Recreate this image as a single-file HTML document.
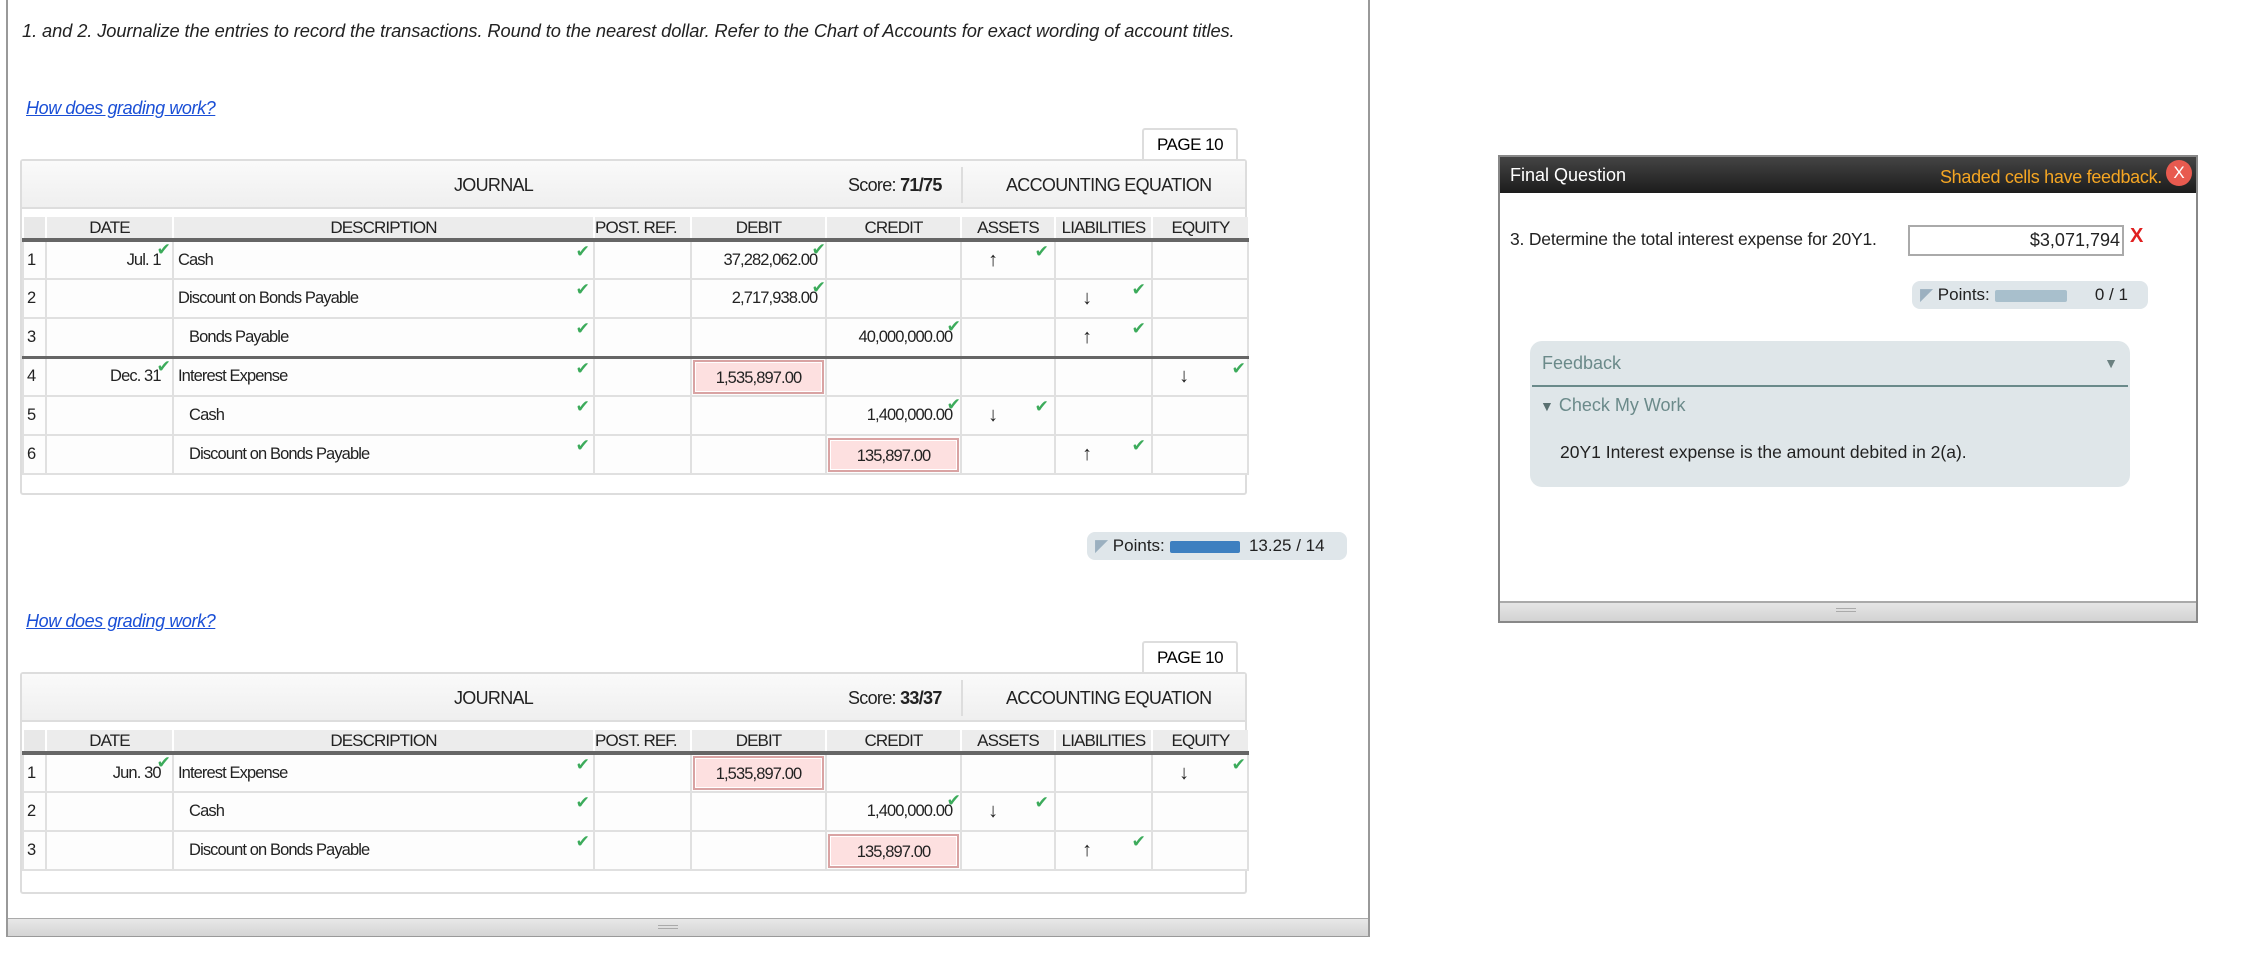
<!DOCTYPE html>
<html><head><meta charset="utf-8"><style>
*{box-sizing:border-box;margin:0;padding:0}
body{width:2248px;height:972px;background:#fff;position:relative;overflow:hidden;font-family:"Liberation Sans",sans-serif}
.abs{position:absolute}
.frame{left:6px;top:-2px;height:939px;border:2px solid #999;border-top:none}
.bbar{left:8px;top:918px;height:18px;background:linear-gradient(#e8e8e8,#d4d4d4);border-top:1px solid #aaa}
.instr{left:22px;top:20px;font-style:italic;font-size:18.3px;color:#222;letter-spacing:-0.1px}
.link{font-style:italic;font-size:18px;color:#1a4fd6;text-decoration:underline;letter-spacing:-0.4px}
.tab{border:2px solid #ddd;border-bottom:none;background:#fff;font-size:17px;letter-spacing:-0.5px;text-align:center;line-height:30px;border-radius:3px 3px 0 0}
.jt{border:2px solid #ddd;border-radius:3px;background:#fff}
.hb{position:absolute;left:0;right:0;top:0;background:linear-gradient(#fafafa,#efefef);border-bottom:2px solid #ddd;font-size:18px;letter-spacing:-0.7px;color:#222}
.hb span{position:absolute}
table{position:absolute;left:0;border-collapse:collapse;font-size:16.5px;letter-spacing:-0.9px;color:#222;table-layout:fixed}
th{font-weight:normal;background:#ececec;height:23px;border-left:2px solid #fff;border-bottom:4px solid #666;font-size:17px;line-height:19px;padding:0;white-space:nowrap;overflow:hidden}
td{border:2px solid #e0e0e0;background:#fdfdfd;position:relative;padding:0 4px;vertical-align:middle;white-space:nowrap}
td.n{padding-left:3px}
.r{text-align:right}
.ck{color:#3cab5b;font-size:17px;position:absolute;top:0px}
.ar{font-size:20px;font-weight:bold}
.pink{background:#fde0e0;border:2px solid #d9a3a3;box-shadow:inset 0 0 0 1px #fff;display:block;height:34px;line-height:32px;text-align:center;margin:0 -3px}
.pts{background:#dfe6ea;border-radius:8px;font-size:17px;color:#222}
.bar{display:inline-block;background:#3d7fc0;height:12px;border-radius:2px;vertical-align:middle}
</style></head><body>
<div class="abs frame" style="width:1364px"></div>
<div class="abs instr">1. and 2. Journalize the entries to record the transactions. Round to the nearest dollar. Refer to the Chart of Accounts for exact wording of account titles.</div>
<div class="abs link" style="left:26px;top:98px">How does grading work?</div>
<div class="abs tab" style="left:1142px;top:128px;width:96px;height:33px">PAGE 10</div>

<div class="abs jt" style="left:20px;top:159px;width:1227px;height:336px">
 <div class="hb" style="height:48px"><span style="left:432px;top:14px">JOURNAL</span><span style="left:826px;top:14px">Score: <b>71/75</b></span><span style="left:939px;top:6px;width:2px;height:36px;background:#ddd"></span><span style="left:984px;top:14px">ACCOUNTING EQUATION</span></div>
 <table style="top:56px;width:1225px">
  <colgroup><col style="width:23px"><col style="width:127px"><col style="width:421px"><col style="width:97px"><col style="width:135px"><col style="width:135px"><col style="width:94px"><col style="width:97px"><col style="width:96px"></colgroup>
  <tr><th style="background:#e8e8e8"></th><th>DATE</th><th>DESCRIPTION</th><th style="text-align:left">POST. REF.</th><th>DEBIT</th><th>CREDIT</th><th>ASSETS</th><th>LIABILITIES</th><th>EQUITY</th></tr>
  <tr style="height:39px"><td class="n">1</td><td class="r">Jul. 1<span class="ck" style="right:2px;top:-2px">✔</span>&nbsp;&nbsp;</td><td>Cash<span class="ck" style="right:4px">✔</span></td><td></td><td class="r">37,282,062.00<span class="ck" style="right:0;top:-2px">✔</span>&nbsp;</td><td></td><td>&nbsp;&nbsp;&nbsp;&nbsp;&nbsp;&nbsp;<span class="ar">↑</span><span class="ck" style="right:6px">✔</span></td><td></td><td></td></tr>
  <tr style="height:39px"><td class="n">2</td><td></td><td>Discount on Bonds Payable<span class="ck" style="right:4px">✔</span></td><td></td><td class="r">2,717,938.00<span class="ck" style="right:0;top:-2px">✔</span>&nbsp;</td><td></td><td></td><td>&nbsp;&nbsp;&nbsp;&nbsp;&nbsp;&nbsp;<span class="ar">↓</span><span class="ck" style="right:6px">✔</span></td><td></td></tr>
  <tr style="height:39px;border-bottom:3px solid #666"><td class="n">3</td><td></td><td>&nbsp;&nbsp;&nbsp;Bonds Payable<span class="ck" style="right:4px">✔</span></td><td></td><td></td><td class="r">40,000,000.00<span class="ck" style="right:0;top:-2px">✔</span>&nbsp;</td><td></td><td>&nbsp;&nbsp;&nbsp;&nbsp;&nbsp;&nbsp;<span class="ar">↑</span><span class="ck" style="right:6px">✔</span></td><td></td></tr>
  <tr style="height:39px"><td class="n">4</td><td class="r">Dec. 31<span class="ck" style="right:2px;top:-2px">✔</span>&nbsp;&nbsp;</td><td>Interest Expense<span class="ck" style="right:4px">✔</span></td><td></td><td><span class="pink">1,535,897.00</span></td><td></td><td></td><td></td><td>&nbsp;&nbsp;&nbsp;&nbsp;&nbsp;&nbsp;<span class="ar">↓</span><span class="ck" style="right:2px">✔</span></td></tr>
  <tr style="height:39px"><td class="n">5</td><td></td><td>&nbsp;&nbsp;&nbsp;Cash<span class="ck" style="right:4px">✔</span></td><td></td><td></td><td class="r">1,400,000.00<span class="ck" style="right:0;top:-2px">✔</span>&nbsp;</td><td>&nbsp;&nbsp;&nbsp;&nbsp;&nbsp;&nbsp;<span class="ar">↓</span><span class="ck" style="right:6px">✔</span></td><td></td><td></td></tr>
  <tr style="height:39px"><td class="n">6</td><td></td><td>&nbsp;&nbsp;&nbsp;Discount on Bonds Payable<span class="ck" style="right:4px">✔</span></td><td></td><td></td><td><span class="pink">135,897.00</span></td><td></td><td>&nbsp;&nbsp;&nbsp;&nbsp;&nbsp;&nbsp;<span class="ar">↑</span><span class="ck" style="right:6px">✔</span></td><td></td></tr>
 </table>
</div>

<div class="abs pts" style="left:1087px;top:532px;width:260px;height:28px;line-height:28px;padding-left:8px"><span style="color:#9bb0c0">◤</span> Points: <span class="bar" style="width:70px"></span> &nbsp;13.25 / 14</div>

<div class="abs link" style="left:26px;top:611px">How does grading work?</div>
<div class="abs tab" style="left:1142px;top:641px;width:96px;height:33px">PAGE 10</div>

<div class="abs jt" style="left:20px;top:672px;width:1227px;height:222px">
 <div class="hb" style="height:48px"><span style="left:432px;top:14px">JOURNAL</span><span style="left:826px;top:14px">Score: <b>33/37</b></span><span style="left:939px;top:6px;width:2px;height:36px;background:#ddd"></span><span style="left:984px;top:14px">ACCOUNTING EQUATION</span></div>
 <table style="top:56px;width:1225px">
  <colgroup><col style="width:23px"><col style="width:127px"><col style="width:421px"><col style="width:97px"><col style="width:135px"><col style="width:135px"><col style="width:94px"><col style="width:97px"><col style="width:96px"></colgroup>
  <tr><th style="background:#e8e8e8"></th><th>DATE</th><th>DESCRIPTION</th><th style="text-align:left">POST. REF.</th><th>DEBIT</th><th>CREDIT</th><th>ASSETS</th><th>LIABILITIES</th><th>EQUITY</th></tr>
  <tr style="height:39px"><td class="n">1</td><td class="r">Jun. 30<span class="ck" style="right:2px;top:-2px">✔</span>&nbsp;&nbsp;</td><td>Interest Expense<span class="ck" style="right:4px">✔</span></td><td></td><td><span class="pink">1,535,897.00</span></td><td></td><td></td><td></td><td>&nbsp;&nbsp;&nbsp;&nbsp;&nbsp;&nbsp;<span class="ar">↓</span><span class="ck" style="right:2px">✔</span></td></tr>
  <tr style="height:39px"><td class="n">2</td><td></td><td>&nbsp;&nbsp;&nbsp;Cash<span class="ck" style="right:4px">✔</span></td><td></td><td></td><td class="r">1,400,000.00<span class="ck" style="right:0;top:-2px">✔</span>&nbsp;</td><td>&nbsp;&nbsp;&nbsp;&nbsp;&nbsp;&nbsp;<span class="ar">↓</span><span class="ck" style="right:6px">✔</span></td><td></td><td></td></tr>
  <tr style="height:39px"><td class="n">3</td><td></td><td>&nbsp;&nbsp;&nbsp;Discount on Bonds Payable<span class="ck" style="right:4px">✔</span></td><td></td><td></td><td><span class="pink">135,897.00</span></td><td></td><td>&nbsp;&nbsp;&nbsp;&nbsp;&nbsp;&nbsp;<span class="ar">↑</span><span class="ck" style="right:6px">✔</span></td><td></td></tr>
 </table>
</div>
<div class="abs bbar" style="width:1360px"></div>
<div class="abs" style="left:658px;top:925px;width:20px;height:4px;border-top:1px solid #aaa;border-bottom:1px solid #aaa"></div>

<!-- right panel -->
<div class="abs" style="left:1498px;top:155px;width:700px;height:468px;border:2px solid #888;background:#fff">
 <div class="abs" style="left:0;top:0;width:696px;height:36px;background:linear-gradient(#444,#1c1c1c);color:#fff;font-size:18px;line-height:36px;padding-left:10px">Final Question
  <span style="position:absolute;right:34px;top:2px;color:#f5a623;font-size:18px;letter-spacing:-0.3px">Shaded cells have feedback.</span>
  <span style="position:absolute;right:4px;top:3px;width:26px;height:26px;border-radius:13px;background:#e85a4f;color:#fff;font-size:17px;line-height:26px;text-align:center">X</span></div>
 <div class="abs" style="left:10px;top:72px;font-size:17.5px;color:#222;letter-spacing:-0.2px">3. Determine the total interest expense for 20Y1.</div>
 <div class="abs" style="left:408px;top:68px;width:216px;height:31px;border:2px solid #aaa;font-size:18px;text-align:right;padding-right:2px;line-height:27px;color:#222">$3,071,794</div>
 <div class="abs" style="left:630px;top:68px;color:#e02020;font-size:20px;font-weight:bold">X</div>
 <div class="abs pts" style="left:412px;top:124px;width:236px;height:28px;line-height:28px;padding-left:8px"><span style="color:#9bb0c0">◤</span> Points: <span class="bar" style="width:72px;background:#a8bfcc"></span>&nbsp;&nbsp;&nbsp;&nbsp;&nbsp;&nbsp;0 / 1</div>
 <div class="abs" style="left:30px;top:184px;width:600px;height:146px;background:#dfe6e9;border-radius:12px">
  <div class="abs" style="left:12px;top:12px;font-size:18px;color:#6b8a8a">Feedback</div>
  <div class="abs" style="right:12px;top:14px;font-size:14px;color:#6b8080">▼</div>
  <div class="abs" style="left:2px;top:44px;width:596px;height:2px;background:#6a8a8a"></div>
  <div class="abs" style="left:10px;top:54px;font-size:18px;color:#6b8a8a"><span style="font-size:14px;color:#5a7070">▼</span> Check My Work</div>
  <div class="abs" style="left:30px;top:101px;font-size:17.5px;color:#222">20Y1 Interest expense is the amount debited in 2(a).</div>
 </div>
 <div class="abs" style="left:0;top:444px;width:696px;height:20px;background:linear-gradient(#e6e6e6,#d2d2d2);border-top:2px solid #aaa"></div>
 <div class="abs" style="left:336px;top:451px;width:20px;height:4px;border-top:1px solid #aaa;border-bottom:1px solid #aaa"></div>
</div>
</body></html>
